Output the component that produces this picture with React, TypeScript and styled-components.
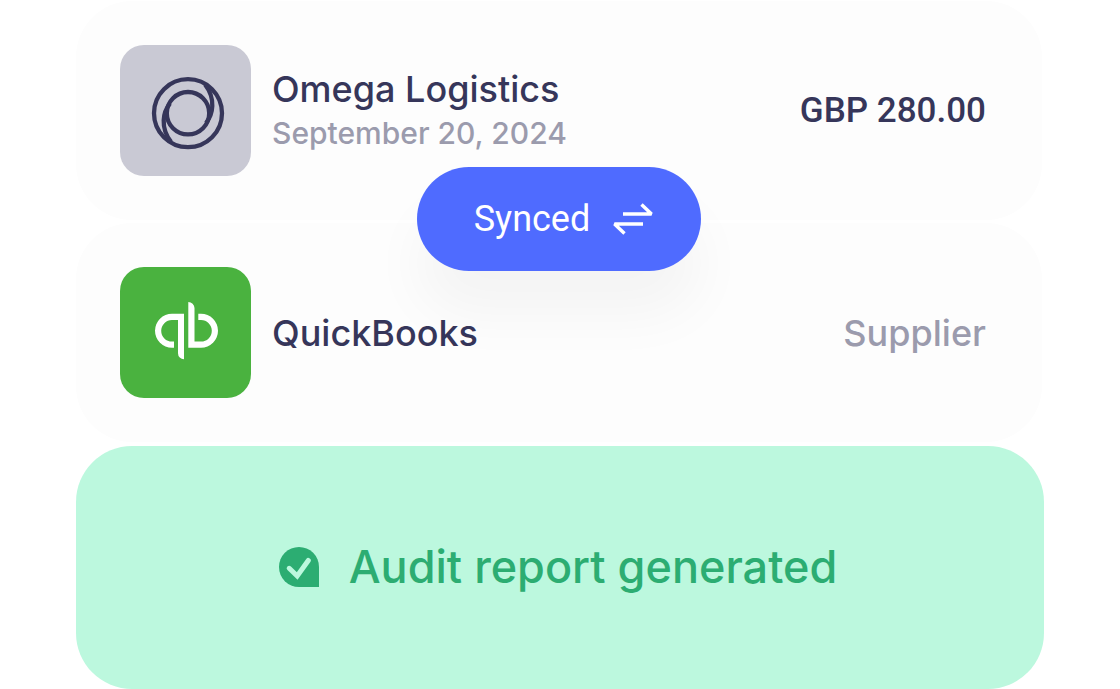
import React from "react";
import styled, { createGlobalStyle } from "styled-components";

const GlobalStyle = createGlobalStyle`
  *, *::before, *::after { box-sizing: border-box; }
  body { margin: 0; background: #ffffff; font-family: Inter, sans-serif; }
  h2, p { margin: 0; }
`;

const Page = styled.main`
  padding: 1px 76px 0;
`;

const Cards = styled.div`
  position: relative;
  display: grid;
  gap: 3px;
  margin: 0 2px 4px 0;
`;

const Card = styled.section`
  display: flex;
  align-items: center;
  gap: 21px;
  padding: 44px 56px 44px 44px;
  border-radius: 56px;
  background: #fdfdfd;
`;

const Tile = styled.div<{ $color: string }>`
  flex: none;
  width: 131px;
  height: 131px;
  border-radius: 24px;
  background: ${(p) => p.$color};

  svg { display: block; }
`;

const Details = styled.div`
  flex: 1;
  min-width: 0;
`;

const Name = styled.h2`
  color: #36365a;
  font-size: 36px;
  font-weight: 500;
  line-height: 44px;
`;

const DateLine = styled.time`
  display: block;
  color: #9b9bad;
  font-size: 30px;
  font-weight: 500;
  line-height: 44px;
`;

const Value = styled.p`
  color: #9b9bad;
  font-size: 36px;
  font-weight: 500;
  line-height: 44px;
`;

const Amount = styled(Value)`
  color: #36365a;
  font-family: Roboto, sans-serif;
  font-size: 35px;
`;

const SyncButton = styled.button`
  position: absolute;
  top: 166px;
  left: 50%;
  transform: translateX(-50%);
  display: flex;
  align-items: center;
  justify-content: center;
  gap: 22px;
  width: 284px;
  height: 104px;
  padding: 0 0 0 10px;
  border: 0;
  border-radius: 52px;
  background: #4f6bff;
  box-shadow: 0 44px 56px rgba(0, 0, 0, 0.04);
  color: #ffffff;
  font-family: Roboto, sans-serif;
  font-size: 36px;
  line-height: 44px;
  cursor: pointer;
`;

const Status = styled.div`
  display: flex;
  align-items: center;
  justify-content: center;
  gap: 30px;
  padding: 93px 28px 94px 24px;
  border-radius: 56px;
  background: #bcf8de;
  color: #2cad72;
  font-size: 45px;
  font-weight: 500;
  line-height: 56px;

  svg { flex: none; }
`;

const OmegaLogo = () => (
  <svg width="130" height="130" viewBox="0 0 130 130" fill="none" stroke="#36365a" strokeWidth="4.3" aria-hidden="true">
    <circle cx="68" cy="68.2" r="34" />
    <circle cx="68" cy="68.2" r="21.2" />
    <path d="M85 39.5C90 46 92.6 54 92.3 61C92.1 67 90 73 86 78" />
    <path d="M51 96.9C46 90.4 43.4 82.4 43.7 75.4C43.9 69.4 46 63.4 50 58.4" />
  </svg>
);

const QuickBooksLogo = () => (
  <svg width="130" height="130" viewBox="0 0 130 130" fill="#ffffff" aria-hidden="true">
    <path d="M64 46.8H52a17 17 0 0 0 0 34h2v-6.2h-2a10.8 10.8 0 0 1 0-21.6h6V86.3a6 6 0 0 0 6 6z" />
    <path d="M68.3 80.8H81a17 17 0 0 0 0-34h-2.7V53H81a10.8 10.8 0 0 1 0 21.6h-6.5V41a6.2 6.2 0 0 0-6.2-6z" />
  </svg>
);

const SyncArrows = () => (
  <svg width="42" height="34" viewBox="0 0 42 34" fill="none" stroke="#ffffff" strokeWidth="3.4" strokeLinejoin="bevel" aria-hidden="true">
    <path d="M11 12H39.5L29.5 2.4" />
    <path d="M31 22H2.5L12.5 31.6" />
  </svg>
);

const CheckBadge = () => (
  <svg width="40" height="40" viewBox="0 0 40 40" fill="none" aria-hidden="true">
    <path d="M20 0a20 20 0 0 1 20 20v20H20a20 20 0 0 1 0-40z" fill="#2cad72" />
    <path d="M10.2 21.3L18.2 29L29.3 13.5" stroke="#bcf8de" strokeWidth="5" strokeLinecap="round" strokeLinejoin="miter" />
  </svg>
);

export default function App() {
  return (
    <>
      <GlobalStyle />
      <Page>
        <Cards>
          <Card>
            <Tile $color="#c9c9d4"><OmegaLogo /></Tile>
            <Details>
              <Name>Omega Logistics</Name>
              <DateLine dateTime="2024-09-20">September 20, 2024</DateLine>
            </Details>
            <Amount>GBP 280.00</Amount>
          </Card>
          <Card>
            <Tile $color="#4ab23f"><QuickBooksLogo /></Tile>
            <Details>
              <Name>QuickBooks</Name>
            </Details>
            <Value>Supplier</Value>
          </Card>
          <SyncButton type="button">
            Synced
            <SyncArrows />
          </SyncButton>
        </Cards>
        <Status role="status">
          <CheckBadge />
          Audit report generated
        </Status>
      </Page>
    </>
  );
}
